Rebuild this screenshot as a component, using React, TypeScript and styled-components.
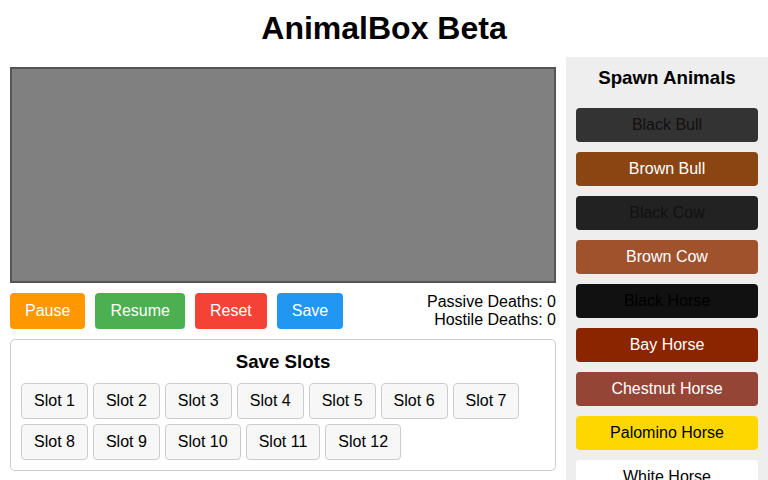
import styled, { createGlobalStyle } from 'styled-components';

const GlobalStyle = createGlobalStyle`
  body {
    margin: 0;
    font-family: "Liberation Sans", Arial, sans-serif;
    background: #fff;
    color: #000;
  }
`;

const animals = [
  { name: 'Black Bull', bg: '#333333', fg: '#111111' },
  { name: 'Brown Bull', bg: '#8b4513', fg: '#ffffff' },
  { name: 'Black Cow', bg: '#222222', fg: '#111111' },
  { name: 'Brown Cow', bg: '#a0522d', fg: '#ffffff' },
  { name: 'Black Horse', bg: '#111111', fg: '#000000' },
  { name: 'Bay Horse', bg: '#8b2500', fg: '#ffffff' },
  { name: 'Chestnut Horse', bg: '#954535', fg: '#ffffff' },
  { name: 'Palomino Horse', bg: '#ffd700', fg: '#000000' },
  { name: 'White Horse', bg: '#ffffff', fg: '#000000' },
];

const controls = [
  { label: 'Pause', bg: '#ff9800' },
  { label: 'Resume', bg: '#4caf50' },
  { label: 'Reset', bg: '#f44336' },
  { label: 'Save', bg: '#2196f3' },
];

const slots = Array.from({ length: 12 }, (_, i) => `Slot ${i + 1}`);

export const App = () => {
  return (
    <>
      <GlobalStyle />
      <Title>AnimalBox Beta</Title>
      <Layout>
        <Main>
          <Canvas />
          <ControlRow>
            <ButtonGroup>
              {controls.map((c) => (
                <ControlButton key={c.label} $bg={c.bg}>
                  {c.label}
                </ControlButton>
              ))}
            </ButtonGroup>
            <Stats>
              <div>Passive Deaths: 0</div>
              <div>Hostile Deaths: 0</div>
            </Stats>
          </ControlRow>
          <SlotBox>
            <BoxTitle>Save Slots</BoxTitle>
            <SlotList>
              {slots.map((s) => (
                <SlotButton key={s}>{s}</SlotButton>
              ))}
            </SlotList>
          </SlotBox>
        </Main>
        <Sidebar>
          <SideTitle>Spawn Animals</SideTitle>
          <AnimalList>
            {animals.map((a) => (
              <AnimalButton key={a.name} $bg={a.bg} $fg={a.fg}>
                {a.name}
              </AnimalButton>
            ))}
          </AnimalList>
        </Sidebar>
      </Layout>
    </>
  );
};
export default App;

const Title = styled.h1`
  margin: 0;
  padding: 10px 0;
  font-size: 32px;
  line-height: 37px;
  text-align: center;
  font-weight: bold;
`;
const Layout = styled.div`
  display: flex;
  align-items: stretch;
  min-height: calc(100vh - 57px);
`;
const Main = styled.div`
  flex: 1;
  padding: 10px;
  display: flex;
  flex-direction: column;
  gap: 10px;
`;
const Canvas = styled.div`
  height: 216px;
  box-sizing: border-box;
  border: 2px solid #555;
  background: #808080;
`;
const ControlRow = styled.div`
  display: flex;
  justify-content: space-between;
  align-items: flex-start;
`;
const ButtonGroup = styled.div`
  display: flex;
  gap: 10px;
`;
const ControlButton = styled.button<{ $bg: string }>`
  font-family: inherit;
  font-size: 16px;
  line-height: 18px;
  padding: 9px 15px;
  border: none;
  border-radius: 4px;
  color: #fff;
  background-color: ${(p) => p.$bg};
`;
const Stats = styled.div`
  text-align: right;
  font-size: 16px;
  line-height: 18px;
`;
const SlotBox = styled.div`
  border: 1px solid #ccc;
  border-radius: 5px;
  padding: 10px;
`;
const BoxTitle = styled.h3`
  margin: 1px 0 10px;
  font-size: 18.72px;
  line-height: 22px;
  text-align: center;
`;
const SlotList = styled.div`
  display: flex;
  flex-wrap: wrap;
  gap: 5px;
`;
const SlotButton = styled.button`
  font-family: inherit;
  font-size: 16px;
  line-height: 18px;
  padding: 8px 12px;
  border: 1px solid #ccc;
  border-radius: 4px;
  background: #f7f7f7;
  color: #000;
`;
const Sidebar = styled.div`
  width: 202px;
  box-sizing: border-box;
  background: #eeeeee;
  padding: 10px;
`;
const SideTitle = styled.h3`
  margin: 0 0 19px;
  font-size: 18.72px;
  line-height: 22px;
  text-align: center;
`;
const AnimalList = styled.div`
  display: flex;
  flex-direction: column;
  gap: 10px;
`;
const AnimalButton = styled.button<{ $bg: string; $fg: string }>`
  font-family: inherit;
  font-size: 16px;
  line-height: 18px;
  padding: 8px;
  border: none;
  border-radius: 4px;
  background-color: ${(p) => p.$bg};
  color: ${(p) => p.$fg};
`;
